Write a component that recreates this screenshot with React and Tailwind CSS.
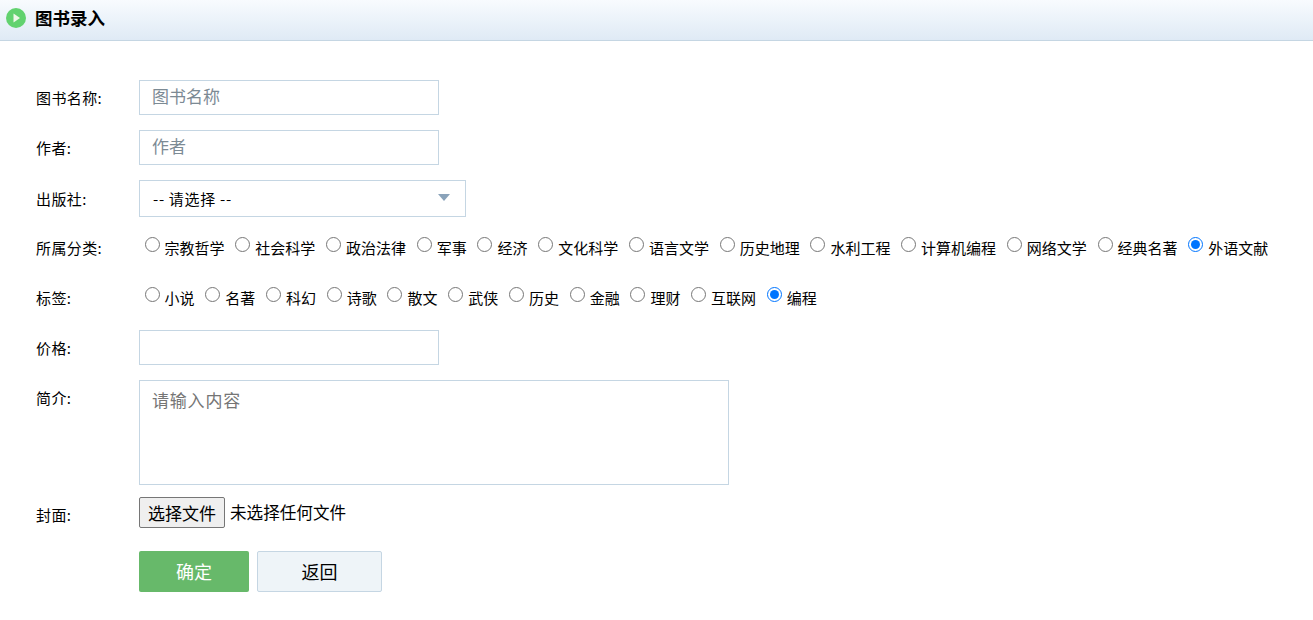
const categories = ["宗教哲学", "社会科学", "政治法律", "军事", "经济", "文化科学", "语言文学", "历史地理", "水利工程", "计算机编程", "网络文学", "经典名著", "外语文献"];
const tags = ["小说", "名著", "科幻", "诗歌", "散文", "武侠", "历史", "金融", "理财", "互联网", "编程"];

const font = { fontFamily: '"Noto Sans CJK SC", "Liberation Sans", sans-serif' };

const Label = ({ children, className = "" }) => (
  <label className={`w-[103px] shrink-0 text-[15px] leading-[20px] tracking-[0.4px] text-black ${className}`}>{children}</label>
);

const RadioGroup = ({ name, items, checked }) => (
  <div className="flex gap-[10.73px] pl-[5.5px]">
    {items.map((item) => (
      <label key={item} className="flex items-start text-[15px] leading-[20px] text-black">
        <input
          type="radio"
          name={name}
          defaultChecked={item === checked}
          className="m-0 mt-[7px] mr-[5px] h-[15px] w-[15px] shrink-0"
        />
        <span className="mt-[8px]">{item}</span>
      </label>
    ))}
  </div>
);

export default function App() {
  return (
    <div style={font} className="h-[620px] overflow-hidden bg-white">
      {/* HEADER */}
      <div className="flex h-[41px] items-center border-b border-[#c5d6e3] bg-gradient-to-b from-[#f8fbfe] to-[#dfeaf5] pb-[4px] pl-[6px]">
        <svg width="20" height="20" viewBox="0 0 20 20" className="mr-[9px]">
          <circle cx="10" cy="10" r="10" fill="#62d26f" />
          <path d="M7.5 5.5 L14 10 L7.5 14.5 Z" fill="#eef8e8" />
        </svg>
        <span className="text-[17.5px] font-bold text-black">图书录入</span>
      </div>

      {/* FORM */}
      <div className="pl-[36px] pt-[39px]">
        <div className="flex h-[35px] items-center">
          <Label>图书名称:</Label>
          <input placeholder="图书名称" className="h-[35px] w-[300px] border border-[#c5d6e3] px-[12px] pb-[5px] text-[17px] outline-none placeholder:text-[#7c8a94]" />
        </div>
        <div className="mt-[15px] flex h-[35px] items-center">
          <Label>作者:</Label>
          <input placeholder="作者" className="h-[35px] w-[300px] border border-[#c5d6e3] px-[12px] pb-[5px] text-[17px] outline-none placeholder:text-[#7c8a94]" />
        </div>
        <div className="mt-[15px] flex h-[37px] items-center">
          <Label>出版社:</Label>
          <div className="flex h-[37px] w-[327px] items-center justify-between border border-[#c5d6e3] pl-[13px] pr-[15px] text-[15px] text-black">
            <span className="mt-[1px] tracking-[0.7px]">-- 请选择 --</span>
            <svg width="12" height="7" viewBox="0 0 12 7" className="mb-[2px]">
              <path d="M0 0 H12 L6 7 Z" fill="#8aa3ba" />
            </svg>
          </div>
        </div>
        <div className="mt-[13px] flex h-[35px] items-start">
          <Label className="mt-[8px]">所属分类:</Label>
          <RadioGroup name="category" items={categories} checked="外语文献" />
        </div>
        <div className="mt-[15px] flex h-[35px] items-start">
          <Label className="mt-[8px]">标签:</Label>
          <RadioGroup name="tag" items={tags} checked="编程" />
        </div>
        <div className="mt-[15px] flex h-[35px] items-center">
          <Label>价格:</Label>
          <input className="h-[35px] w-[300px] border border-[#c5d6e3] px-[12px] text-[17px] outline-none" />
        </div>
        <div className="mt-[15px] flex items-start">
          <Label className="mt-[8px]">简介:</Label>
          <textarea placeholder="请输入内容" className="h-[105px] w-[590px] resize-none border border-[#c5d6e3] px-[12px] py-[6px] text-[17px] tracking-[0.8px] outline-none placeholder:text-[#757575]" />
        </div>
        <div className="mt-[12px] flex h-[31px] items-center">
          <Label className="mt-[5px]">封面:</Label>
          <button className="h-[31px] w-[86px] rounded-[2px] border border-[#767676] bg-[#efefef] text-[17px] text-black">选择文件</button>
          <span className="ml-[5px] text-[16.6px] text-black">未选择任何文件</span>
        </div>
        <div className="mt-[23px] flex gap-[8px] pl-[103px]">
          <button className="h-[41px] w-[110px] rounded-[2px] bg-[#67b96a] text-[18px] text-white">确定</button>
          <button className="h-[41px] w-[125px] rounded-[2px] border border-[#c5d6e3] bg-[#eef4f8] text-[18px] text-black">返回</button>
        </div>
      </div>
    </div>
  );
}
